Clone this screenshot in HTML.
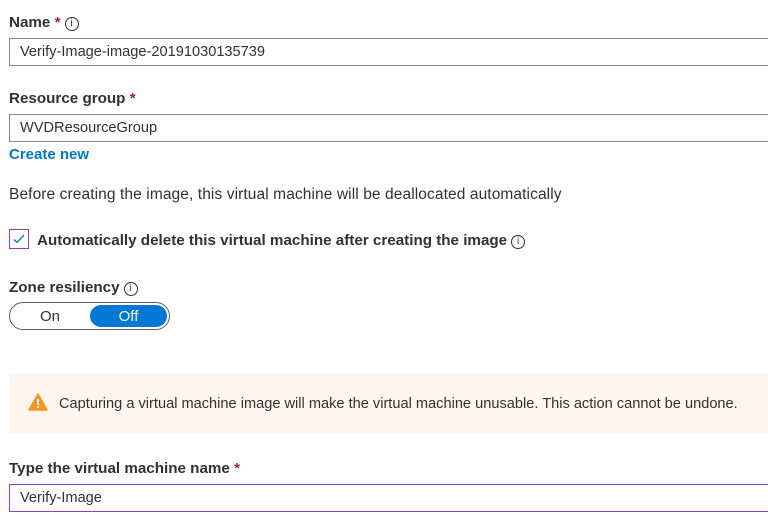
<!DOCTYPE html>
<html><head><style>
body{margin:0;width:768px;height:527px;background:#fff;font-family:"Liberation Sans",sans-serif;color:#323130;font-size:14px;position:relative;overflow:hidden}
.a{position:absolute;white-space:nowrap}
.lbl{font-weight:bold;font-size:15.2px;color:#323130}
.req{color:#a4262c}
.inp{position:absolute;left:9px;width:780px;height:28px;border:1px solid #8a8886;box-sizing:border-box;padding-left:10px;line-height:26px;font-size:14.6px;color:#323130}
.info{display:inline-block;width:12px;height:12px;border:1.3px solid #323130;border-radius:50%;font-size:10px;line-height:12px;text-align:center;font-weight:normal;vertical-align:1px;margin-left:4px}
</style></head><body>
<div class="a lbl" style="left:9px;top:14px">Name <span class="req">*</span><span class="info">i</span></div>
<div class="inp" style="top:38px">Verify-Image-image-20191030135739</div>
<div class="a lbl" style="left:9px;top:90px">Resource group <span class="req">*</span></div>
<div class="inp" style="top:114px">WVDResourceGroup</div>
<div class="a" style="left:9px;top:146px;color:#0078d4;font-weight:bold;font-size:15px">Create new</div>
<div class="a" style="left:9px;top:186px;font-size:15.5px;letter-spacing:0.1px">Before creating the image, this virtual machine will be deallocated automatically</div>
<div class="a" style="left:9px;top:229px;width:20px;height:20px;border:1px solid #8a3fc0;box-sizing:border-box"><svg width="18" height="18" viewBox="0 0 18 18"><path d="M4 9.5l3 3 7-7.5" fill="none" stroke="#0078d4" stroke-width="1.3"/></svg></div>
<div class="a lbl" style="left:37px;top:232px">Automatically delete this virtual machine after creating the image<span class="info">i</span></div>
<div class="a lbl" style="left:9px;top:279px">Zone resiliency<span class="info">i</span></div>
<div class="a" style="left:9px;top:302px;width:161px;height:28px;border:1px solid #605e5c;border-radius:14px;box-sizing:border-box">
<span class="a" style="left:30px;top:5px;font-size:15px">On</span>
<div class="a" style="left:80px;top:2px;width:77px;height:22px;background:#0078d4;border-radius:11px;color:#fff;text-align:center;line-height:23px;font-size:15px">Off</div>
</div>
<div class="a" style="left:9px;top:373px;width:770px;height:60px;background:#fdf6ef"></div>
<svg class="a" style="left:28px;top:393px" width="20" height="18" viewBox="0 0 20 18"><path d="M10 1L19 17H1Z" fill="#f7941d" stroke="#f7941d" stroke-linejoin="round" stroke-width="1.5"/><rect x="9" y="6" width="2" height="6" fill="#fff"/><rect x="9" y="13" width="2" height="2" fill="#fff"/></svg>
<div class="a" style="left:59px;top:396px;font-size:14.6px">Capturing a virtual machine image will make the virtual machine unusable. This action cannot be undone.</div>
<div class="a lbl" style="left:9px;top:460px">Type the virtual machine name <span class="req">*</span></div>
<div class="inp" style="top:484px;border-color:#8a3fc0">Verify-Image</div>
</body></html>
